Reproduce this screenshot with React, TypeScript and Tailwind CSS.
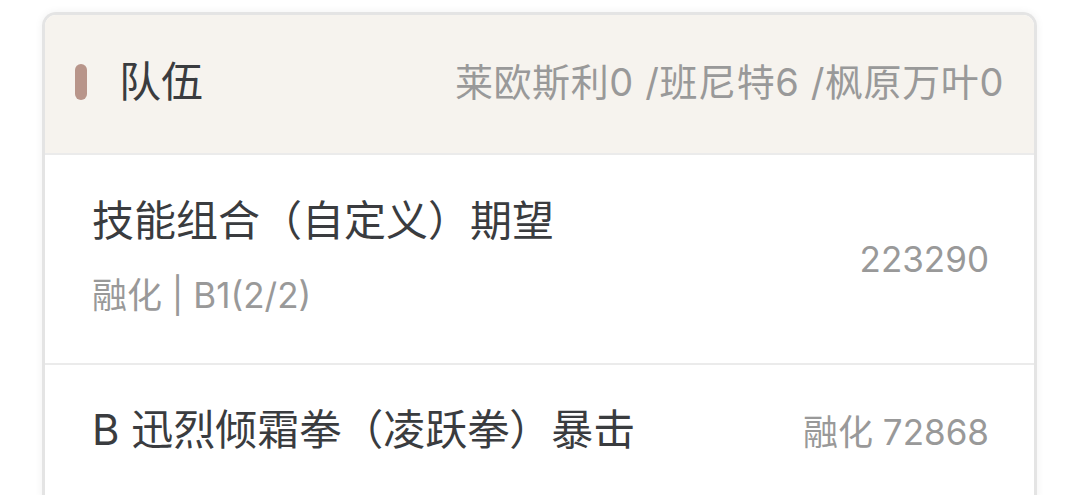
import React from "react";

const rows = [
  { title: "技能组合（自定义）期望", sub: "融化 | B1(2/2)", value: "223290" },
  { title: "B 迅烈倾霜拳（凌跃拳）暴击", sub: "", value: "融化 72868" },
];

export default function App() {
  return (
    <div className="w-[1080px] h-[495px] overflow-hidden bg-white pt-[12px] pl-[42px] font-['Inter','Noto_Sans_CJK_SC',sans-serif]">
      <div className="w-[995px] rounded-t-[14px] border-[3px] border-b-0 border-[#e4e4e4] shadow-[0_0_8px_rgba(0,0,0,0.06)] overflow-hidden">
        {/* Header */}
        <div className="h-[140px] bg-[#f6f3ee] flex items-center justify-between pl-[30px] pr-[30px] pb-[5px] border-b-2 border-[#ebebeb]">
          <div className="flex items-center">
            <div className="w-[12px] h-[36px] rounded-full bg-[#b8958a]" />
            <span className="ml-[32px] text-[42px] leading-none text-[#3a3c3f]">队伍</span>
          </div>
          <span className="text-[38px] tracking-[0.6px] leading-none text-[#999999]">莱欧斯利0 /班尼特6 /枫原万叶0</span>
        </div>

        {/* Rows */}
        {rows.map((r, i) => (
          <div
            key={i}
            className={`flex items-center justify-between pl-[47px] pr-[45px] bg-white ${
              i === 0 ? "h-[210px] border-b-2 border-[#ebebeb]" : "h-[135px]"
            }`}
          >
            <div className="flex flex-col pb-[6px]">
              <span className="text-[42px] leading-none text-[#3a3c3f]">{r.title}</span>
              {r.sub && <span className="mt-[36px] text-[35px] leading-none text-[#999999]">{r.sub}</span>}
            </div>
            <span className="text-[35px] leading-none text-[#999999]">{r.value}</span>
          </div>
        ))}
      </div>
    </div>
  );
}
